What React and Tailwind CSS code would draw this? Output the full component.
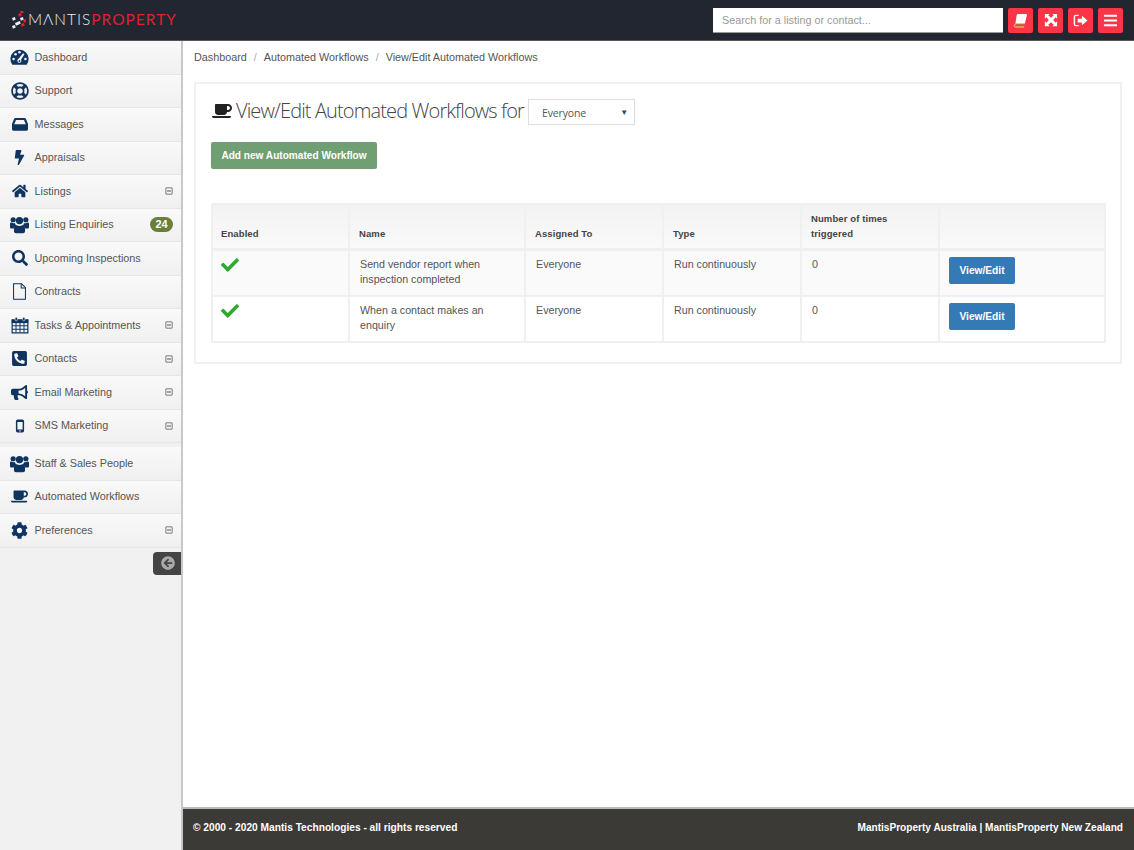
import React from "react";
import {
  FaRegLifeRing, FaBolt, FaHome, FaSearch, FaPhoneSquareAlt, FaBullhorn, FaCoffee, FaCog, FaCheck,
  FaBars, FaArrowCircleLeft, FaRegMinusSquare,
} from "react-icons/fa";

const Dash = ({ size }) => (
  <svg width={size} height={size} viewBox="0 0 24 24">
    <path fill="currentColor" d="M3 21A11.5 11.5 0 1 1 21 21Z" />
    <g fill="#f5f5f5">
      <circle cx="4.5" cy="14" r="1.6" />
      <circle cx="7" cy="8" r="1.6" />
      <circle cx="12" cy="5.5" r="1.6" />
      <circle cx="19.5" cy="14" r="1.6" />
      <path d="M16.5 6.5l1.8 1.3-4.3 6.7a2.6 2.6 0 1 1-3.2-.9z" />
    </g>
    <circle cx="12" cy="16.5" r="1.2" fill="currentColor" />
  </svg>
);
const Inbox = ({ size }) => (
  <svg width={size} height={size} viewBox="0 0 24 24">
    <path fill="currentColor" fillRule="evenodd" d="M5 3h14a2 2 0 0 1 1.8 1.1L24 12v8a2 2 0 0 1-2 2H2a2 2 0 0 1-2-2v-8L3.2 4.100A2 2 0 0 1 5 3ZM6 6l-2.700 6.500h17.400L18 6Z" />
  </svg>
);
const Users = ({ size }) => (
  <svg width={size} height={size} viewBox="0 0 24 22">
    <g fill="currentColor">
      <circle cx="4" cy="5" r="3.300" />
      <circle cx="20" cy="5" r="3.300" />
      <circle cx="12" cy="6" r="4.600" />
      <path d="M0 10c0-1 1-1.500 2-1.500 1 1 3 1 4.200.6.300 1.500 1 2.600 2 3.400-2 .8-3.200 2-3.400 3.500H1.500C.5 16 0 15 0 14Z" />
      <path d="M24 10c0-1-1-1.500-2-1.500-1 1-3 1-4.200.6-.3 1.500-1 2.600-2 3.400 2 .8 3.200 2 3.400 3.500h3.300c1 0 1.500-1 1.500-2Z" />
      <path d="M8.500 12c2 1.300 5 1.300 7 0 2 .3 3.500 1.800 3.500 4v3.500c0 1.500-1 2.500-2.500 2.500h-9C6 22 5 21 5 19.500V16c0-2.200 1.500-3.700 3.500-4Z" />
    </g>
  </svg>
);
const FileIc = ({ size }) => (
  <svg width={size} height={size} viewBox="0 0 16 20" fill="none" stroke="currentColor" strokeWidth="1.200">
    <path d="M1 1h9.500L15 5.500V19H1Z" />
    <path d="M10 1v5h5" />
  </svg>
);
const Cal = ({ size }) => (
  <svg width={size} height={size} viewBox="0 0 24 24" fill="none" stroke="currentColor">
    <path d="M1.500 5h21v17.500h-21Z" strokeWidth="1.600" />
    <path d="M1 5h22v4.500H1Z" fill="currentColor" strokeWidth="0" />
    <path d="M1.500 13h21M1.500 17.700h21M6.700 9v13M12 9v13M17.300 9v13" strokeWidth="1.300" />
    <rect x="5.500" y="1.500" width="3" height="5" rx="1.500" fill="currentColor" stroke="#f5f5f5" strokeWidth=".8" />
    <rect x="15.500" y="1.500" width="3" height="5" rx="1.500" fill="currentColor" stroke="#f5f5f5" strokeWidth=".8" />
  </svg>
);
const Mobile = ({ size }) => (
  <svg width={size} height={size} viewBox="0 0 16 24">
    <path fill="currentColor" fillRule="evenodd" d="M4 1h8a3 3 0 0 1 3 3v16a3 3 0 0 1-3 3H4a3 3 0 0 1-3-3V4a3 3 0 0 1 3-3Zm-.500 4v13h9V5Z" />
    <circle cx="8" cy="20.500" r="1.300" fill="#f5f5f5" />
  </svg>
);
const Book = ({ size }) => (
  <svg width={size} height={size} viewBox="0 0 16 16">
    <path fill="#fff" d="M5 1h8.500c1 0 1.500.6 1.300 1.500L12.600 11.500H2.500L4 2c.1-.6.500-1 1-1Z" />
    <path fill="none" stroke="#c9771f" strokeWidth="1.100" d="M12.500 12H3.500c-1.300 0-1.500 2.200 0 2.200h8.300" />
    <path fill="none" stroke="#fff" strokeWidth=".7" d="M2.500 11.500 1.200 13.500c0 .8.500 1.500 1.500 1.500h9.300" />
  </svg>
);
const Full = ({ size }) => (
  <svg width={size} height={size} viewBox="0 0 16 16" fill="#fff">
    <path d="M1 1h5.500L4.800 2.700 8 5.500l3.200-2.800L9.500 1H15v5.500l-1.700-1.700L10.500 8l2.800 3.200L15 9.500V15H9.500l1.700-1.700L8 10.500l-3.200 2.800L6.500 15H1V9.500l1.700 1.700L5.500 8 2.700 4.800 1 6.500Z" />
  </svg>
);
const SignOut = ({ size }) => (
  <svg width={size} height={size} viewBox="0 0 16 16">
    <path fill="none" stroke="#fff" strokeWidth="1.500" d="M6 2.500H3A1.500 1.500 0 0 0 1.500 4v8A1.500 1.500 0 0 0 3 13.500h3" />
    <path fill="#fff" d="M5 6h4.500V3L15.500 8l-6 5v-3H5Z" />
  </svg>
);

const items = [
  { t: "Dashboard", i: Dash, s: 19 },
  { t: "Support", i: FaRegLifeRing, s: 18 },
  { t: "Messages", i: Inbox, s: 16 },
  { t: "Appraisals", i: FaBolt, s: 15 },
  { t: "Listings", i: FaHome, s: 16, m: 1 },
  { t: "Listing Enquiries", i: Users, s: 19, b: "24" },
  { t: "Upcoming Inspections", i: FaSearch, s: 16 },
  { t: "Contracts", i: FileIc, s: 17 },
  { t: "Tasks & Appointments", i: Cal, s: 18, m: 1 },
  { t: "Contacts", i: FaPhoneSquareAlt, s: 17, m: 1 },
  { t: "Email Marketing", i: FaBullhorn, s: 17, m: 1 },
  { t: "SMS Marketing", i: Mobile, s: 14, m: 1, gap: 1 },
  { t: "Staff & Sales People", i: Users, s: 19 },
  { t: "Automated Workflows", i: FaCoffee, s: 17 },
  { t: "Preferences", i: FaCog, s: 17, m: 1 },
];

function Logo() {
  const w = [[2, 7], [2, 15], [7, 11], [10, 7], [5, 12]];
  const r = [[10, 0], [13, 9], [11, 13], [8, 3]];
  return (
    <div className="flex items-center ml-[10px]">
      <svg width="16" height="18" viewBox="0 0 16 18" className="mr-[2px]">
        <g fill="#eeeeee">
          {w.map(([x, y]) => <rect key={`${x}-${y}`} x={x} y={y} width="3" height="2.800" transform={`rotate(-20 ${x} ${y})`} />)}
        </g>
        <g fill="#e2202f">
          {r.map(([x, y]) => <rect key={`${x}-${y}`} x={x} y={y} width="3" height="2.800" transform={`rotate(-20 ${x} ${y})`} />)}
        </g>
      </svg>
      <span className="font-['Lato',sans-serif] font-light text-[15.5px] leading-none tracking-[1px] text-[#f0f0f0]">MΛNTIS</span>
      <span className="font-['Lato',sans-serif] font-normal text-[15.5px] leading-none tracking-[1px] text-[#e0202e]">PROPERTY</span>
    </div>
  );
}

function HeaderBtn({ icon: I, size = 13 }) {
  return (
    <button className="w-[25px] h-[25px] rounded-[2px] bg-[#fb3545] flex items-center justify-center text-white">
      <I size={size} />
    </button>
  );
}

function NavItem({ t, i: I, s, m, b, gap }) {
  return (
    <div className={`h-[33.5px] pb-[0.5px] flex items-center bg-gradient-to-b from-[#f9f9f9] to-[#f0f0f0] border-b border-[#e6e6e6] ${gap ? "mb-[4px]" : ""}`}>
      <span className="w-[34.5px] flex justify-center pl-[5px] text-[#0f3460]">
        <I size={s} />
      </span>
      <span className="flex-1 text-[10.8px] text-[#555]">{t}</span>
      {m ? <FaRegMinusSquare size={8} className="text-[#555] mr-[8px]" /> : null}
      {b ? (
        <span className="mr-[8px] w-[23px] h-[15px] rounded-full bg-[#6b7f3a] text-white text-[11px] font-bold leading-[15px] text-center">{b}</span>
      ) : null}
    </div>
  );
}

function Row({ name, shaded }) {
  const td = "align-top border-2 border-[#f0f0f0] pl-[10px] pr-[8px] pt-[6px] pb-[7px] text-[10.7px] leading-[15px] text-[#555]";
  return (
    <tr className={`h-[46px] ${shaded ? "bg-[#fafafa]" : "bg-white"}`}>
      <td className={td}><FaCheck size={18} className="text-[#2eaa2e] -mt-[1px] -ml-[2px]" /></td>
      <td className={td}>{name}</td>
      <td className={td}>Everyone</td>
      <td className={td}>Run continuously</td>
      <td className={td}>0</td>
      <td className={td}>
        <button className="block -ml-[1px] w-[66px] h-[27px] rounded-[2px] bg-[#337ab7] text-white text-[10.2px] font-bold text-center">View/Edit</button>
      </td>
    </tr>
  );
}

export default function App() {
  const th = "align-bottom text-left border-2 border-[#f0f0f0] border-b-[3px] pl-[9px] pr-[8px] pt-[6px] pb-[7px] text-[9.5px] leading-[15px] font-bold text-[#444] tracking-[0.1px]";
  return (
    <div className="w-[1134px] h-[850px] flex flex-col overflow-hidden bg-white font-['Liberation_Sans',Arial,sans-serif]">
      <header className="h-[41px] shrink-0 bg-[#212630] border-b border-[#555] flex items-center justify-between pr-[11px]">
        <Logo />
        <div className="flex items-center gap-[5px]">
          <input
            readOnly
            placeholder="Search for a listing or contact..."
            className="w-[290px] h-[25px] bg-white border-b border-[#999] px-[9px] text-[10.8px] text-[#555] placeholder:text-[#999] outline-none"
          />
          <HeaderBtn icon={Book} size={15} />
          <HeaderBtn icon={Full} size={14} />
          <HeaderBtn icon={SignOut} size={15} />
          <HeaderBtn icon={FaBars} size={15} />
        </div>
      </header>
      <div className="flex-1 flex min-h-0">
        <aside className="w-[183px] shrink-0 bg-[#f1f1f1] border-r-2 border-[#c8c8c8]">
          {items.map((it) => <NavItem key={it.t} {...it} />)}
          <div className="flex justify-end mt-[4px]">
            <div className="w-[28px] h-[23px] bg-[#444] rounded-l-[4px] flex items-center justify-center pl-[2px]">
              <FaArrowCircleLeft size={14} className="text-[#aaa]" />
            </div>
          </div>
        </aside>
        <div className="flex-1 flex flex-col min-w-0">
          <main className="flex-1 pl-[11px] pr-[12px]">
            <nav className="h-[41px] flex items-start pt-[10px] text-[10.8px] leading-[13px] text-[#555]">
              <span>Dashboard</span>
              <span className="mx-[7px] text-[#aaa]">/</span>
              <span>Automated Workflows</span>
              <span className="mx-[7px] text-[#aaa]">/</span>
              <span>View/Edit Automated Workflows</span>
            </nav>
            <section className="h-[282px] border-2 border-[#f0f0f0] pl-[15px] pr-[15px]">
              <div className="h-[30px] mt-[12px] flex items-center">
                <FaCoffee size={20} className="text-[#222] mr-[4px] ml-[1px]" />
                <h1 className="font-['Open_Sans',sans-serif] font-light text-[20px] leading-none tracking-[-0.87px] text-[#444] whitespace-nowrap">View/Edit Automated Workflows for</h1>
                <div className="ml-[4px] mt-[2px] w-[107px] h-[26px] border border-[#ddd] flex items-center justify-between pl-[13px] pr-[6px] pt-[3px] font-['Open_Sans',sans-serif] text-[10.5px] tracking-[-0.15px] text-[#555]">
                  <span>Everyone</span>
                  <span className="text-[8px] text-[#444] -mt-[3px]">▼</span>
                </div>
              </div>
              <button className="block mt-[16px] w-[166px] h-[27px] rounded-[2px] bg-[#6f9f72] text-white text-[10.1px] font-bold text-center">Add new Automated Workflow</button>
              <table className="mt-[34px] w-[895px] table-fixed border-collapse border border-[#e2e2e2]">
                <colgroup>
                  <col className="w-[137px]" />
                  <col className="w-[176px]" />
                  <col className="w-[138px]" />
                  <col className="w-[138px]" />
                  <col className="w-[138px]" />
                  <col />
                </colgroup>
                <thead>
                  <tr className="h-[43px] bg-gradient-to-b from-[#f2f2f2] to-[#fafafa]">
                    <th className={th}><span className="-ml-[1px] block">Enabled</span></th>
                    <th className={th}>Name</th>
                    <th className={th}>Assigned To</th>
                    <th className={th}>Type</th>
                    <th className={th}>Number of times triggered</th>
                    <th className={th}></th>
                  </tr>
                </thead>
                <tbody>
                  <Row shaded name="Send vendor report when inspection completed" />
                  <Row name="When a contact makes an enquiry" />
                </tbody>
              </table>
            </section>
          </main>
          <footer className="h-[43px] shrink-0 bg-[#3b3a36] border-t-2 border-[#bbb] flex items-center justify-between pl-[10px] pr-[11px] pb-[4px] font-bold text-white">
            <span className="text-[10.2px]">© 2000 - 2020 Mantis Technologies - all rights reserved</span>
            <span className="text-[10.1px]">MantisProperty Australia | MantisProperty New Zealand</span>
          </footer>
        </div>
      </div>
    </div>
  );
}
